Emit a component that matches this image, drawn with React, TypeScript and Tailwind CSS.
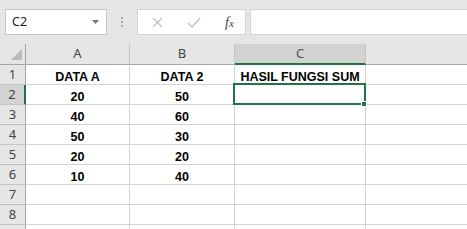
import React from "react";

const rows: [string, string, string][] = [
  ["DATA A", "DATA 2", "HASIL FUNGSI SUM"],
  ["20", "50", ""],
  ["40", "60", ""],
  ["50", "30", ""],
  ["20", "20", ""],
  ["10", "40", ""],
  ["", "", ""],
  ["", "", ""],
  ["", "", ""],
];

const cellFont = { fontFamily: '"Liberation Sans", Arial, sans-serif' };
const uiFont = { fontFamily: '"Noto Sans", "Open Sans", sans-serif' };

export default function App() {
  return (
    <div className="w-[467px] h-[229px] overflow-hidden bg-[#e6e6e6] flex flex-col">
      {/* toolbar */}
      <div className="h-[44px] flex items-start pt-[9px] pl-[5px] shrink-0">
        <div
          className="w-[102px] h-[26px] bg-white border border-[#c6c6c6] flex items-center justify-between pl-[6px] pr-[7px] text-[12.5px] text-[#222]"
          style={uiFont}
        >
          <span>C2</span>
          <svg width="7" height="4" viewBox="0 0 7 4">
            <polygon points="0,0 7,0 3.5,4" fill="#777" />
          </svg>
        </div>
        <div className="w-[30px] h-[26px] flex flex-col items-center justify-center gap-[2px]">
          <span className="w-[2px] h-[2px] bg-[#a6a6a6]" />
          <span className="w-[2px] h-[2px] bg-[#a6a6a6]" />
          <span className="w-[2px] h-[2px] bg-[#a6a6a6]" />
        </div>
        <div className="w-[109px] h-[26px] bg-white border border-[#d4d4d4] flex items-center">
          <div className="w-[34px] flex justify-center pl-[4px]">
            <svg width="11" height="11" viewBox="0 0 11 11">
              <path d="M1 1 L10 10 M10 1 L1 10" stroke="#c0c0c0" strokeWidth="1.3" />
            </svg>
          </div>
          <div className="w-[44px] flex justify-center">
            <svg width="14" height="11" viewBox="0 0 14 11">
              <path d="M1 6 L5 10 L13 1" stroke="#c0c0c0" strokeWidth="1.4" fill="none" />
            </svg>
          </div>
          <div
            className="flex-1 flex justify-center pr-[2px] italic text-[14px] text-[#444]"
            style={{ fontFamily: '"Liberation Serif", "Times New Roman", serif' }}
          >
            <span>
              f<span className="text-[11px]">x</span>
            </span>
          </div>
        </div>
        <div className="w-[4px]" />
        <div className="flex-1 h-[26px] bg-white border border-[#d4d4d4] border-r-0" />
      </div>

      {/* column headers */}
      <div className="flex h-[21px] shrink-0 text-[13px] text-[#444]" style={uiFont}>
        <div className="w-[26px] h-full border-r border-b border-[#a6a6a6] bg-[#e6e6e6] relative">
          <svg className="absolute left-[11px] top-[5px]" width="12" height="12" viewBox="0 0 12 12">
            <polygon points="11,0 11,11 0,11" fill="#b9b9b9" />
          </svg>
        </div>
        <div className="w-[104px] h-full border-r border-[#c3c3c3] border-b border-b-[#a6a6a6] flex items-center justify-center">
          A
        </div>
        <div className="w-[105px] h-full border-r border-[#c3c3c3] border-b border-b-[#a6a6a6] flex items-center justify-center">
          B
        </div>
        <div className="w-[131px] h-full border-r border-[#c3c3c3] bg-[#d2d2d2] border-b-2 border-b-[#217346] flex items-center justify-center text-[#555]">
          C
        </div>
        <div className="flex-1 h-full border-b border-[#a6a6a6]" />
      </div>

      {/* rows */}
      <div className="flex flex-col">
        {rows.map((r, i) => {
          const selected = i === 1;
          return (
            <div key={i} className="flex h-[20px] shrink-0">
              <div
                className={
                  selected
                    ? "w-[26px] h-full bg-[#d2d2d2] border-r-2 border-r-[#217346] border-b border-b-[#c3c3c3] flex items-center justify-center text-[13px] text-[#444]"
                    : "w-[26px] h-full bg-[#e6e6e6] border-r border-r-[#a6a6a6] border-b border-b-[#c3c3c3] flex items-center justify-center text-[13px] text-[#444]"
                }
                style={uiFont}
              >
                {i + 1}
              </div>
              <div
                className="w-[104px] h-full bg-white border-r border-b border-[#d4d4d4] flex justify-center pt-[4px] leading-[16px] text-[12.5px] font-bold text-black"
                style={cellFont}
              >
                {r[0]}
              </div>
              <div
                className="w-[105px] h-full bg-white border-r border-b border-[#d4d4d4] flex justify-center pt-[4px] leading-[16px] text-[12.5px] font-bold text-black"
                style={cellFont}
              >
                {r[1]}
              </div>
              <div
                className="w-[131px] h-full bg-white border-r border-b border-[#d4d4d4] flex justify-center pt-[4px] leading-[16px] text-[12.5px] font-bold text-black whitespace-nowrap relative"
                style={cellFont}
              >
                {r[2]}
                {selected && (
                  <>
                    <div className="absolute left-[-2px] top-[-2px] right-[-1px] bottom-[-1px] border-2 border-[#217346] z-10" />
                    <div className="absolute right-[-2px] bottom-[-3px] w-[6px] h-[6px] bg-[#217346] border border-white z-20" />
                  </>
                )}
              </div>
              <div className="flex-1 h-full bg-white border-b border-[#d4d4d4]" />
            </div>
          );
        })}
      </div>
    </div>
  );
}
